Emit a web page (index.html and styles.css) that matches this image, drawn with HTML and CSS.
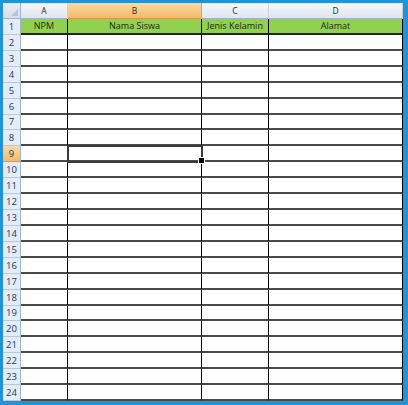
FILE: index.html
```html
<!DOCTYPE html>
<html>
<head>
<meta charset="utf-8">
<link rel="stylesheet" href="styles.css">
</head>
<body>
<div class="frame">
  <div class="sheet" id="sheet">
    <div class="corner"><span class="tri"></span></div>
    <div class="colhead">A</div>
    <div class="colhead sel">B</div>
    <div class="colhead">C</div>
    <div class="colhead">D</div>

    <div class="rowhead">1</div>
    <div class="cell title">NPM</div>
    <div class="cell title">Nama Siswa</div>
    <div class="cell title">Jenis Kelamin</div>
    <div class="cell title">Alamat</div>
  </div>
</div>
<script src="app.js"></script>
</body>
</html>
```
FILE: app.js
```js
const sheet = document.getElementById('sheet');
for (let r = 2; r <= 24; r++) {
  const h = document.createElement('div');
  h.className = 'rowhead' + (r === 9 ? ' sel' : '');
  h.textContent = r;
  sheet.appendChild(h);
  for (let c = 0; c < 4; c++) {
    const d = document.createElement('div');
    d.className = 'cell' + (r === 9 && c === 1 ? ' active' : '');
    if (r === 9 && c === 1) {
      const f = document.createElement('span');
      f.className = 'fill';
      d.appendChild(f);
    }
    sheet.appendChild(d);
  }
}
```
FILE: styles.css
```css
html, body {
  margin: 0;
  padding: 0;
  background: #ffffff;
}
.frame {
  width: 408px;
  height: 405px;
  box-sizing: border-box;
  background: #2193d6;
  padding: 3px 5px 4px 3px;
}
.sheet {
  display: grid;
  grid-template-columns: 18px 47px 134px 67px 134px;
  grid-template-rows: 16px repeat(24, 1fr);
  height: 398px;
  background: #ffffff;
  font-family: "Open Sans", "Liberation Sans", sans-serif;
}
.corner {
  position: relative;
  background: linear-gradient(#e9eef5, #d6dee9);
  border-right: 1px solid #9eb6ce;
  border-bottom: 1px solid #9eb6ce;
}
.tri {
  position: absolute;
  right: 2px;
  bottom: 2px;
  width: 0;
  height: 0;
  border-left: 7px solid transparent;
  border-bottom: 7px solid #b5c4d8;
}
.colhead {
  background: linear-gradient(#f6f8fb, #dfe5ee);
  border-right: 1px solid #c5d1df;
  border-bottom: 1px solid #9eb6ce;
  font-size: 8.5px;
  color: #2b2b2b;
  display: flex;
  align-items: center;
  justify-content: center;
}
.colhead.sel {
  background: linear-gradient(#fbd9a1, #f3bb6b);
  border-right-color: #e1a34f;
  border-bottom-color: #d89a45;
}
.rowhead {
  background: #e4ecf7;
  border-right: 1px solid #9eb6ce;
  border-bottom: 1px solid #b8c9dc;
  font-size: 9.5px;
  color: #22395a;
  display: flex;
  align-items: center;
  justify-content: center;
}
.rowhead.sel {
  background: linear-gradient(#fbd9a1, #f3bb6b);
  border-bottom-color: #d89a45;
}
.cell {
  position: relative;
  border-right: 1px solid #000;
  border-bottom: 2px solid #4a4a4a;
  box-sizing: border-box;
}
.cell.title {
  background: #92d050;
  font-size: 9px;
  color: #1d2a10;
  display: flex;
  align-items: center;
  justify-content: center;
  border-bottom-color: #222;
}
.cell.active {
  outline: 2px solid #3a3a3a;
  outline-offset: -1px;
  z-index: 2;
}
.fill {
  position: absolute;
  right: -4px;
  bottom: -4px;
  width: 5px;
  height: 5px;
  background: #000;
  border: 1px solid #fff;
}
```
